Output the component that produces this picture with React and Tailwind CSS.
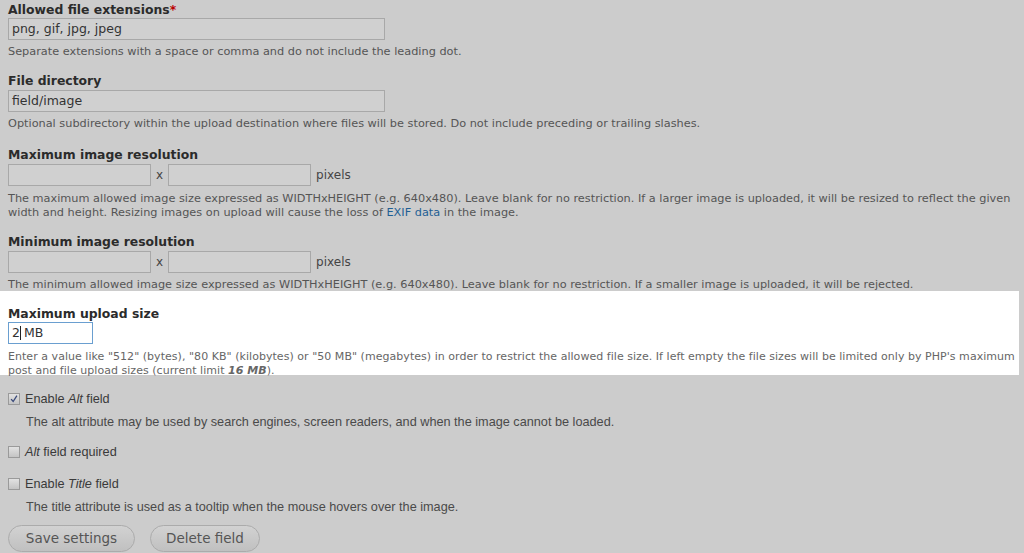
import React from 'react';

const dv = { fontFamily: '"DejaVu Sans", Verdana, sans-serif' };

function Label({ children, required }) {
  return (
    <div className="text-[12.4px] font-bold leading-[15px] text-[#2b2b2b]">
      {children}
      {required && <span className="text-[#b00]">*</span>}
    </div>
  );
}

function Desc({ children, className = '' }) {
  return <div className={`text-[11.3px] leading-[14px] text-[#555] ${className}`}>{children}</div>;
}

function TextInput({ value = '', className = '' }) {
  return (
    <div className={`h-[22px] border border-[#a8a8a8] bg-[#d0d0d0] px-[3px] text-[12.5px] leading-[20px] text-[#333] ${className}`}>
      {value}
    </div>
  );
}

function ResolutionRow() {
  return (
    <div className="mt-[2px] flex items-center">
      <TextInput className="w-[143px]" />
      <span className="mx-[5px] text-[12px] text-[#444]">x</span>
      <TextInput className="w-[143px]" />
      <span className="ml-[5px] text-[12px] text-[#444]">pixels</span>
    </div>
  );
}

function Checkbox({ checked }) {
  return (
    <span className="flex h-[12px] w-[12px] items-center justify-center border border-[#9a9a9a] bg-gradient-to-b from-[#e2e2e2] to-[#c4c4c4]">
      {checked && (
        <svg viewBox="0 0 12 12" className="h-[10px] w-[10px]">
          <path d="M2.5 6.2 L5 9 L9.5 2" fill="none" stroke="#3a4a7a" strokeWidth="1.6" />
        </svg>
      )}
    </span>
  );
}

export default function App() {
  const cb = { fontFamily: '"Liberation Sans", Arial, sans-serif' };
  return (
    <div className="h-[553px] w-[1024px] overflow-hidden bg-[#cccccc]" style={dv}>
      <div className="px-[8px] pt-[2px]">
        <Label required>Allowed file extensions</Label>
        <TextInput value="png, gif, jpg, jpeg" className="mt-[1px] w-[377px]" />
        <Desc className="mt-[5px]">Separate extensions with a space or comma and do not include the leading dot.</Desc>

        <div className="mt-[14px]">
          <Label>File directory</Label>
          <TextInput value="field/image" className="mt-[2px] w-[377px]" />
          <Desc className="mt-[5px]">Optional subdirectory within the upload destination where files will be stored. Do not include preceding or trailing slashes.</Desc>
        </div>

        <div className="mt-[16px]">
          <Label>Maximum image resolution</Label>
          <ResolutionRow />
          <Desc className="mt-[6px]">
            The maximum allowed image size expressed as WIDTHxHEIGHT (e.g. 640x480). Leave blank for no restriction. If a larger image is uploaded, it will be resized to reflect the given width and height. Resizing images on upload will cause the loss of <span className="text-[#1e5f94]">EXIF data</span> in the image.
          </Desc>
        </div>

        <div className="mt-[14px]">
          <Label>Minimum image resolution</Label>
          <ResolutionRow />
          <Desc className="mt-[5px]">The minimum allowed image size expressed as WIDTHxHEIGHT (e.g. 640x480). Leave blank for no restriction. If a smaller image is uploaded, it will be rejected.</Desc>
        </div>
      </div>

      {/* highlighted field */}
      <div className="-mt-[1px] mr-[5px] h-[84px] bg-white pl-[8px] pr-0 pt-[15px]">
        <Label>Maximum upload size</Label>
        <div className="relative mt-[1px] h-[22px] w-[85px] border border-[#6a9fd0] bg-white px-[3px] text-[12.5px] leading-[20px] text-[#333]">
          2 MB
          <span className="absolute top-[3px] left-[11px] h-[14px] w-[1px] bg-[#222]" />
        </div>
        <Desc className="mt-[6px] text-[11px] tracking-[0.04px] text-[#666]">
          <span className="whitespace-nowrap">Enter a value like "512" (bytes), "80 KB" (kilobytes) or "50 MB" (megabytes) in order to restrict the allowed file size. If left empty the file sizes will be limited only by PHP's maximum</span>
          <br />
          post and file upload sizes (current limit <em className="font-bold">16 MB</em>).
        </Desc>
      </div>

      <div className="px-[8px] pt-[17px] text-[12.7px] text-[#3a3a3a]" style={cb}>
        <div className="flex items-center gap-[5px] leading-[14px]">
          <Checkbox checked />
          <span>Enable <em>Alt</em> field</span>
        </div>
        <div className="ml-[18px] mt-[9px] leading-[14px] text-[#4a4a4a]">
          The alt attribute may be used by search engines, screen readers, and when the image cannot be loaded.
        </div>

        <div className="mt-[16px] flex items-center gap-[5px] leading-[14px]">
          <Checkbox />
          <span><em>Alt</em> field required</span>
        </div>

        <div className="mt-[18px] flex items-center gap-[5px] leading-[14px]">
          <Checkbox />
          <span>Enable <em>Title</em> field</span>
        </div>
        <div className="ml-[18px] mt-[9px] leading-[14px] text-[#4a4a4a]">
          The title attribute is used as a tooltip when the mouse hovers over the image.
        </div>

        <div className="mt-[11px] flex gap-[15px]" style={dv}>
          <button className="h-[27px] w-[127px] rounded-full border border-[#ababab] bg-gradient-to-b from-[#d2d2d2] to-[#c0c0c0] text-[13.5px] text-[#555]">Save settings</button>
          <button className="h-[27px] w-[110px] rounded-full border border-[#ababab] bg-gradient-to-b from-[#d2d2d2] to-[#c0c0c0] text-[13.5px] text-[#555]">Delete field</button>
        </div>
      </div>
    </div>
  );
}
